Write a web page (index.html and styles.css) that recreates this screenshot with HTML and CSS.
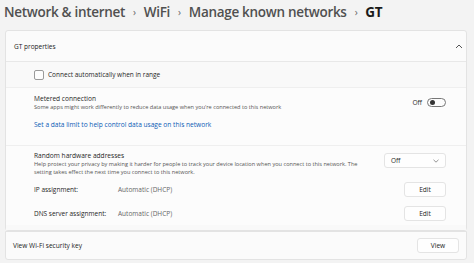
FILE: index.html
```html
<!DOCTYPE html>
<html>
<head>
<meta charset="utf-8">
<link rel="stylesheet" href="styles.css">
</head>
<body>
<div class="crumbs">
  <span class="crumb">Network &amp; internet</span>
  <span class="sep">›</span>
  <span class="crumb">WiFi</span>
  <span class="sep">›</span>
  <span class="crumb">Manage known networks</span>
  <span class="sep">›</span>
  <span class="current">GT</span>
</div>

<div class="card">
  <div class="card-head">
    <span>GT properties</span>
    <svg class="chev" width="8" height="5" viewBox="0 0 8 5"><path d="M1 4 L4 1 L7 4" fill="none" stroke="#555" stroke-width="1"/></svg>
  </div>
  <div class="panel">
    <div class="row row-check">
      <span class="box"></span>
      <span class="label">Connect automatically when in range</span>
    </div>
    <div class="row row-metered">
      <div class="line">
        <div class="text">
          <div class="title">Metered connection</div>
          <div class="desc">Some apps might work differently to reduce data usage when you're connected to this network</div>
        </div>
        <div class="toggle-wrap">
          <span class="off">Off</span>
          <span class="toggle"><span class="knob"></span></span>
        </div>
      </div>
      <a class="link">Set a data limit to help control data usage on this network</a>
    </div>
    <div class="row row-random">
      <div class="text">
        <div class="title">Random hardware addresses</div>
        <div class="desc">Help protect your privacy by making it harder for people to track your device location when you connect to this network. The setting takes effect the next time you connect to this network.</div>
      </div>
      <div class="select">
        <span>Off</span>
        <svg width="6" height="4" viewBox="0 0 6 4"><path d="M0.5 0.8 L3 3.2 L5.5 0.8" fill="none" stroke="#777" stroke-width="0.8"/></svg>
      </div>
    </div>
    <div class="row row-kv">
      <span class="key">IP assignment:</span>
      <span class="val">Automatic (DHCP)</span>
      <span class="btn">Edit</span>
    </div>
    <div class="row row-kv">
      <span class="key">DNS server assignment:</span>
      <span class="val">Automatic (DHCP)</span>
      <span class="btn">Edit</span>
    </div>
  </div>
</div>

<div class="card bottom">
  <span class="label">View Wi-Fi security key</span>
  <span class="btn">View</span>
</div>
</body>
</html>
```

FILE: styles.css
```css
html, body {
  margin: 0;
  padding: 0;
  background: #f3f3f3;
  font-family: "Open Sans", "Noto Sans", sans-serif;
  color: #1b1b1b;
  width: 474px;
  height: 263px;
  overflow: hidden;
}
.crumbs {
  height: 26px;
  display: flex;
  align-items: center;
  gap: 6px;
  padding-left: 4px;
  font-size: 13.5px;
  font-weight: 600;
  color: #505050;
  white-space: nowrap;
  letter-spacing: -0.3px;
  margin-top: -1px;
}
.crumbs .sep {
  font-size: 10px;
  font-weight: 400;
  color: #666;
  padding: 0 2px;
}
.crumbs .current {
  color: #1a1a1a;
  font-weight: 700;
}
.card {
  margin: 5px 7px 0 5px;
  background: #fbfbfb;
  border: 1px solid #e3e3e3;
  border-radius: 3px;
}
.card-head {
  height: 30px;
  display: flex;
  align-items: center;
  justify-content: space-between;
  padding: 0 3px 0 8px;
  font-size: 6.5px;
  color: #222;
}
.panel {
  border-top: 1px solid #e8e8e8;
  background: #f9f9f9;
  padding-bottom: 5px;
}
.row {
  padding: 0 20px 0 28px;
  font-size: 6.5px;
  color: #1f1f1f;
}
.row-check {
  height: 25px;
  display: flex;
  align-items: center;
  gap: 4px;
  background: #f9f9f9;
  border-bottom: 1px solid #efefef;
}
.box {
  width: 10px;
  height: 10px;
  border: 1px solid #9a9a9a;
  border-radius: 2px;
  background: #fdfdfd;
  box-sizing: border-box;
}
.row-metered {
  background: #fcfcfc;
  padding-top: 6px;
  height: 51px;
  border-bottom: 1px solid #efefef;
}
.line {
  display: flex;
  justify-content: space-between;
  align-items: center;
}
.title {
  font-size: 6.6px;
  line-height: 9px;
}
.desc {
  font-size: 5.6px;
  line-height: 8px;
  color: #555;
}
.toggle-wrap {
  display: flex;
  align-items: center;
  gap: 5px;
}
.off {
  font-size: 6.6px;
}
.toggle {
  width: 19px;
  height: 9px;
  border: 1px solid #777;
  border-radius: 6px;
  display: flex;
  align-items: center;
  padding-left: 2px;
  box-sizing: border-box;
}
.knob {
  width: 5px;
  height: 5px;
  background: #333;
  border-radius: 50%;
}
.link {
  display: block;
  margin-top: 9px;
  font-size: 6.6px;
  color: #0a5bb5;
}
.row-random {
  background: #fcfcfc;
  padding-top: 5px;
  height: 26px;
  display: flex;
  justify-content: space-between;
  align-items: flex-start;
}
.row-random .text {
  width: 340px;
}
.select {
  margin-top: 2px;
  width: 62px;
  height: 15px;
  background: #fefefe;
  border: 1px solid #e4e4e4;
  border-radius: 3px;
  box-sizing: border-box;
  display: flex;
  align-items: center;
  justify-content: space-between;
  padding: 0 6px 0 6px;
}
.row-kv {
  background: #fcfcfc;
  height: 24px;
  display: flex;
  align-items: center;
}
.key {
  width: 84px;
}
.val {
  color: #666;
  flex: 1;
}
.btn {
  width: 42px;
  height: 15px;
  background: #fefefe;
  border: 1px solid #e4e4e4;
  border-radius: 3px;
  box-sizing: border-box;
  display: flex;
  align-items: center;
  justify-content: center;
  font-size: 6.6px;
}
.bottom {
  margin-top: 0;
  height: 27px;
  display: flex;
  align-items: center;
  justify-content: space-between;
  padding: 0 7px 0 7px;
  font-size: 6.6px;
  border-radius: 0 0 3px 3px;
}
```
